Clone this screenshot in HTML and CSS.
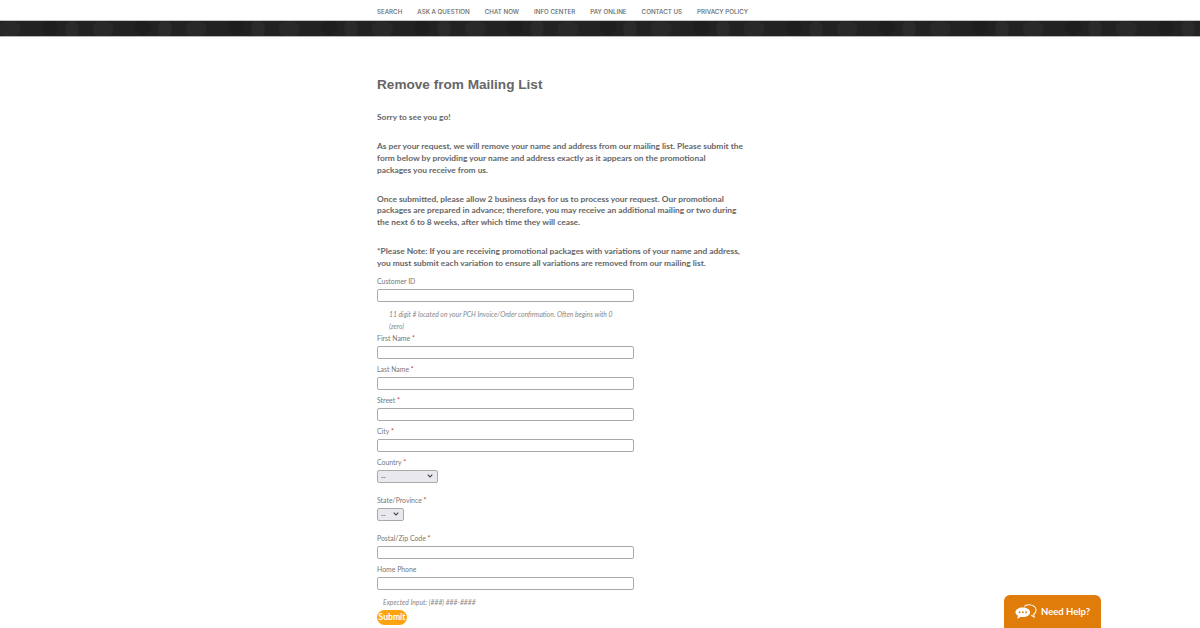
FILE: index.html
```html
<!DOCTYPE html>
<html lang="en">
<head>
    <meta charset="UTF-8">
    <meta name="viewport" content="width=device-width, initial-scale=1.0">
    <title>Remove from Mailing List</title>
    <link rel="stylesheet" href="styles.css">
</head>
<body>
    <nav class="topnav">
        <a href="#">SEARCH</a>
        <a href="#">ASK A QUESTION</a>
        <a href="#">CHAT NOW</a>
        <a href="#">INFO CENTER</a>
        <a href="#">PAY ONLINE</a>
        <a href="#">CONTACT US</a>
        <a href="#">PRIVACY POLICY</a>
    </nav>
    <div class="band"></div>
    <main class="content">
        <h1>Remove from Mailing List</h1>
        <p class="intro">Sorry to see you go!</p>
        <p class="intro">As per your request, we will remove your name and address from our mailing list. Please submit the form below by providing your name and address exactly as it appears on the promotional<br>packages you receive from us.</p>
        <p class="intro">Once submitted, please allow 2 business days for us to process your request. Our promotional packages are prepared in advance; therefore, you may receive an additional mailing or two during the next 6 to 8 weeks, after which time they will cease.</p>
        <p class="intro">*Please Note: If you are receiving promotional packages with variations of your name and address, you must submit each variation to ensure all variations are removed from our mailing list.</p>
        <form class="mailing-form">
            <div class="form-group">
                <label for="customerId">Customer ID</label>
                <input type="text" id="customerId">
                <p class="hint hint-wide">11 digit # located on your PCH Invoice/Order confirmation. Often begins with 0 (zero)</p>
            </div>
            <div class="form-group">
                <label for="firstName">First Name <span class="req">*</span></label>
                <input type="text" id="firstName">
            </div>
            <div class="form-group">
                <label for="lastName">Last Name <span class="req">*</span></label>
                <input type="text" id="lastName">
            </div>
            <div class="form-group">
                <label for="street">Street <span class="req">*</span></label>
                <input type="text" id="street">
            </div>
            <div class="form-group">
                <label for="city">City <span class="req">*</span></label>
                <input type="text" id="city">
            </div>
            <div class="form-group select-group">
                <label for="country">Country <span class="req">*</span></label>
                <select id="country" class="select-country"><option>--</option></select>
            </div>
            <div class="form-group select-group">
                <label for="state">State/Province <span class="req">*</span></label>
                <select id="state" class="select-state"><option>--</option></select>
            </div>
            <div class="form-group">
                <label for="postal">Postal/Zip Code <span class="req">*</span></label>
                <input type="text" id="postal">
            </div>
            <div class="form-group">
                <label for="phone">Home Phone</label>
                <input type="text" id="phone">
                <p class="hint hint-phone">Expected Input: (###) ###-####</p>
            </div>
            <button type="button" class="submit-btn">Submit</button>
        </form>
    </main>
    <a href="#" class="help-tab">
        <svg class="help-icon" width="22" height="16" viewBox="0 0 24 17">
            <path d="M10 2.500c1-1.400 3-2 5-2 4.500 0 8 2.500 8 6 0 2-1 3.500-2.700 4.500l.7 3-3.300-2" fill="none" stroke="#fff" stroke-width="1.100"/>
            <path d="M8.500 3.500c4.500 0 8 2.300 8 5.300s-3.500 5.200-8 5.200c-.8 0-1.600-.1-2.300-.2L2.500 16l.8-3.300C1.500 11.700.5 10.300.5 8.800c0-3 3.500-5.300 8-5.300z" fill="#fff"/>
            <circle cx="5" cy="8.800" r="1" fill="#df7c0a"/>
            <circle cx="8.500" cy="8.800" r="1" fill="#df7c0a"/>
            <circle cx="12" cy="8.800" r="1" fill="#df7c0a"/>
        </svg>
        <span>Need Help?</span>
    </a>
</body>
</html>
```

FILE: styles.css
```css
body {
    font-family: "Lato", Arial, sans-serif;
    margin: 0;
    padding: 0;
    background-color: #fff;
    color: #666;
}

.topnav {
    display: flex;
    gap: 15px;
    height: 20px;
    padding: 2px 0 0 377px;
    align-items: center;
    box-sizing: border-box;
}

.topnav a {
    font-family: "Inter", Arial, sans-serif;
    font-size: 6.2px;
    font-weight: 500;
    color: #666;
    text-decoration: none;
    white-space: nowrap;
}

.band {
    height: 15px;
    border-top: 1px solid #c4c4c4;
    border-bottom: 1px solid #b4b4b4;
    background-color: #222;
    background-image:
        radial-gradient(ellipse 16px 12px at 10px 8px, #292929 60%, transparent 75%),
        radial-gradient(ellipse 12px 12px at 50px 6px, #1e1e1e 60%, transparent 75%),
        radial-gradient(ellipse 10px 14px at 72px 8px, #2a2a2a 60%, transparent 75%);
    background-size: 93px 15px;
}

.content {
    width: 370px;
    margin-left: 377px;
    padding-top: 39px;
}

h1 {
    font-family: "Liberation Sans", Arial, sans-serif;
    font-size: 13.6px;
    line-height: 17px;
    font-weight: bold;
    color: #666;
    margin: 0 0 19px 0;
}

.intro {
    font-size: 8.4px;
    line-height: 11.7px;
    font-weight: 700;
    margin: 0 0 17.4px 0;
}

.mailing-form {
    width: 257px;
    margin-top: -10px;
}

.form-group {
    margin-bottom: 6px;
}

label {
    display: block;
    font-size: 6.9px;
    line-height: 9px;
    margin-bottom: 3px;
    color: #777;
}

.req {
    color: #c33;
}

input {
    display: block;
    width: 100%;
    height: 13px;
    padding: 0;
    box-sizing: border-box;
    border: 1px solid #aaa;
    border-radius: 2px;
    background: #fff;
}

select {
    display: block;
    height: 13px;
    padding: 0 0 0 3px;
    border: 1px solid #aaa;
    border-radius: 2px;
    appearance: none;
    background-color: #e9e9ed;
    background-image: url("data:image/svg+xml,%3Csvg xmlns='http://www.w3.org/2000/svg' width='6' height='4'%3E%3Cpath d='M.7.7 3 3l2.300-2.300' fill='none' stroke='%23444' stroke-width='1.100'/%3E%3C/svg%3E");
    background-repeat: no-repeat;
    background-position: right 4px center;
    font-size: 7px;
    color: #555;
}

.select-country {
    width: 61px;
}

.select-state {
    width: 27px;
}

.select-group {
    margin-bottom: 13px;
}

.hint {
    font-size: 6.8px;
    line-height: 12px;
    font-style: italic;
    color: #888;
    margin: 0;
}

.hint-wide {
    padding: 6px 12px 0 12px;
    margin-bottom: -4px;
}

.hint-phone {
    padding: 6px 0 0 6px;
    margin-bottom: -4px;
}

.submit-btn {
    display: block;
    width: 30px;
    height: 15px;
    padding: 0;
    border: none;
    border-radius: 8px;
    background-color: #fca311;
    color: #fff;
    font-family: "Lato", Arial, sans-serif;
    font-size: 8.6px;
    font-weight: bold;
    cursor: pointer;
}

.help-tab {
    position: fixed;
    left: 1004px;
    bottom: 0;
    width: 97px;
    height: 33px;
    display: flex;
    align-items: center;
    justify-content: center;
    gap: 4px;
    box-sizing: border-box;
    background-color: #df7c0a;
    border-radius: 6px 6px 0 0;
    color: #fff;
    font-size: 9.5px;
    font-weight: 700;
    text-decoration: none;
}
```
